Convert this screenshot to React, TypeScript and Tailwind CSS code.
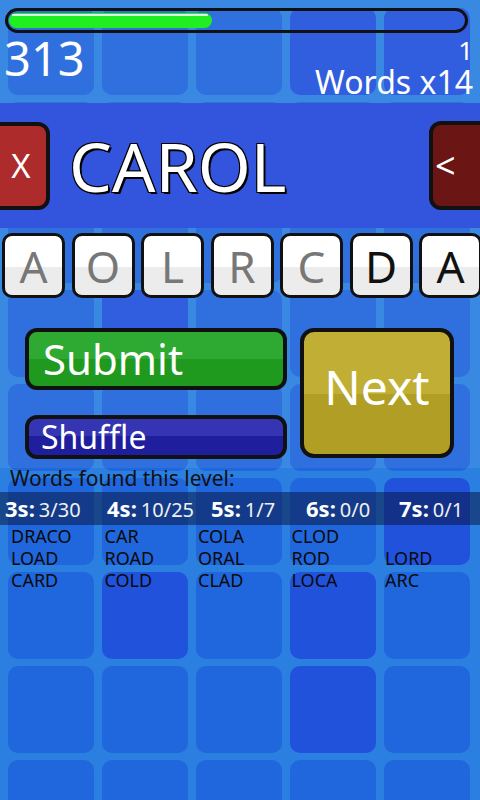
import React from "react";

const darkTiles = new Set(["0-3", "0-4", "3-1", "5-4", "6-1", "6-3", "7-3"]);

const letters: { ch: string; used: boolean }[] = [
  { ch: "A", used: true },
  { ch: "O", used: true },
  { ch: "L", used: true },
  { ch: "R", used: true },
  { ch: "C", used: true },
  { ch: "D", used: false },
  { ch: "A", used: false },
];

const stats = [
  { k: "3s:", v: "3/30", w: "w-[102px]" },
  { k: "4s:", v: "10/25", w: "w-[104px]" },
  { k: "5s:", v: "1/7", w: "w-[95px]" },
  { k: "6s:", v: "0/0", w: "w-[93px]" },
  { k: "7s:", v: "0/1", w: "" },
];

const words = [
  "DRACO", "CAR", "COLA", "CLOD", "",
  "LOAD", "ROAD", "ORAL", "ROD", "LORD",
  "CARD", "COLD", "CLAD", "LOCA", "ARC",
];

export default function App() {
  const tiles: React.ReactNode[] = [];
  for (let r = 0; r < 9; r++) {
    for (let c = 0; c < 5; c++) {
      const dark = darkTiles.has(`${r}-${c}`);
      tiles.push(
        <div
          key={`${r}-${c}`}
          className={dark ? "rounded-[10px] bg-[#2152dc]" : "rounded-[10px] bg-[#2066dc]"}
        />
      );
    }
  }

  return (
    <div className="relative w-[480px] h-[800px] overflow-hidden bg-[#2a7fe0] [font-family:'Noto_Sans',sans-serif]">
      <div className="absolute inset-0 grid grid-cols-[repeat(5,86px)] auto-rows-[87px] gap-x-[8px] gap-y-[7px] pl-[8px] pt-[8px]">
        {tiles}
      </div>

      <div className="relative flex flex-col">
        <div className="h-[468px] flex flex-col bg-[rgba(255,255,255,0.07)]">
          {/* HUD */}
          <div className="h-[103px] flex flex-col">
            <div className="mt-[8px] ml-[5px] w-[463px] h-[25px] rounded-full border-[3px] border-[#111] px-[1px] py-[2px]">
              <div className="relative h-full w-[203px] rounded-full bg-[#20ee20]">
                <div className="absolute left-[3px] right-[4px] top-[1px] h-[2px] rounded-full bg-[#d8ffd8]" />
              </div>
            </div>
            <div className="flex justify-between">
              <div className="ml-[4px] mt-[2px] text-[47px] leading-none text-white">313</div>
              <div className="mr-[7px] mt-[6px] flex flex-col items-end text-white">
                <div className="text-[26px] leading-[22px]">1</div>
                <div className="mt-[6px] text-[32px] leading-[30px]">Words x14</div>
              </div>
            </div>
          </div>

          {/* Band */}
          <div className="h-[125px] bg-[#3355dd] flex items-center">
            <div className="shrink-0 -ml-[14px] w-[64px] h-[88px] rounded-[12px] border-[4px] border-[#111] bg-[#ad2b2b] flex items-center justify-center pl-[6px] text-[33px] leading-none text-white">
              X
            </div>
            <div className="ml-[19px] text-[68px] leading-none text-white [text-shadow:2px_2px_0_#000,-1px_-1px_0_#000,1px_-1px_0_#000,-1px_1px_0_#000]">
              CAROL
            </div>
            <div className="flex-1" />
            <div className="shrink-0 -mr-[13px] w-[64px] h-[89px] rounded-[12px] border-[4px] border-[#111] bg-[#6b1515] flex items-center pl-[2px] text-[36px] leading-none text-white">
              &lt;
            </div>
          </div>

          {/* Letter tiles */}
          <div className="mt-[5px] flex gap-[6.5px] pl-[2px]">
            {letters.map((l, i) => (
              <div
                key={i}
                className={
                  "shrink-0 w-[63px] h-[65px] rounded-[10px] border-[3px] border-[#111] bg-[linear-gradient(to_bottom,#ffffff_0%,#ffffff_52%,#ececec_52%,#ececec_100%)] flex items-center justify-center text-[44px] leading-none " +
                  (l.used ? "text-[#777777]" : "text-[#111111]")
                }
              >
                {l.ch}
              </div>
            ))}
          </div>

          {/* Buttons */}
          <div className="mt-[30px] flex pl-[25px] gap-[13px]">
            <div className="flex flex-col w-[262px]">
              <div className="h-[62px] rounded-[12px] border-[4px] border-[#111] bg-[linear-gradient(to_bottom,#2eaa33_0%,#2eaa33_50%,#20991f_50%,#20991f_100%)] flex items-center pl-[14px] text-[42px] leading-none text-white">
                Submit
              </div>
              <div className="mt-[25px] h-[44px] rounded-[12px] border-[4px] border-[#111] bg-[linear-gradient(to_bottom,#3535b3_0%,#3535b3_48%,#1f1f9e_48%,#1f1f9e_100%)] flex items-center pl-[12px] text-[32px] leading-none text-white">
                Shuffle
              </div>
            </div>
            <div className="w-[154px] h-[130px] rounded-[14px] border-[4px] border-[#111] bg-[linear-gradient(to_bottom,#c1ae35_0%,#c1ae35_51%,#b09f24_51%,#b09f24_100%)] flex items-center justify-center pb-[12px] text-[48px] leading-none text-white">
              Next
            </div>
          </div>
        </div>

        {/* Words found */}
        <div className="pl-[10px] text-[21px] leading-none text-[#111]">Words found this level:</div>
        <div className="mt-[3px] h-[33px] bg-[rgba(6,16,54,0.5)] flex items-center pl-[5px] text-white">
          {stats.map((s, i) => (
            <div key={i} className={"flex items-baseline shrink-0 " + s.w}>
              <span className="font-bold text-[22px] leading-none">{s.k}</span>
              <span className="ml-[4px] text-[20px] leading-none text-[#f0f0f0]">{s.v}</span>
            </div>
          ))}
        </div>
        <div className="pl-[11px] grid grid-cols-[repeat(5,93.5px)] text-[18px] leading-[22px] text-[#0a0a0a]">
          {words.map((w, i) => (
            <div key={i} className="h-[22px]">{w}</div>
          ))}
        </div>
      </div>
    </div>
  );
}
